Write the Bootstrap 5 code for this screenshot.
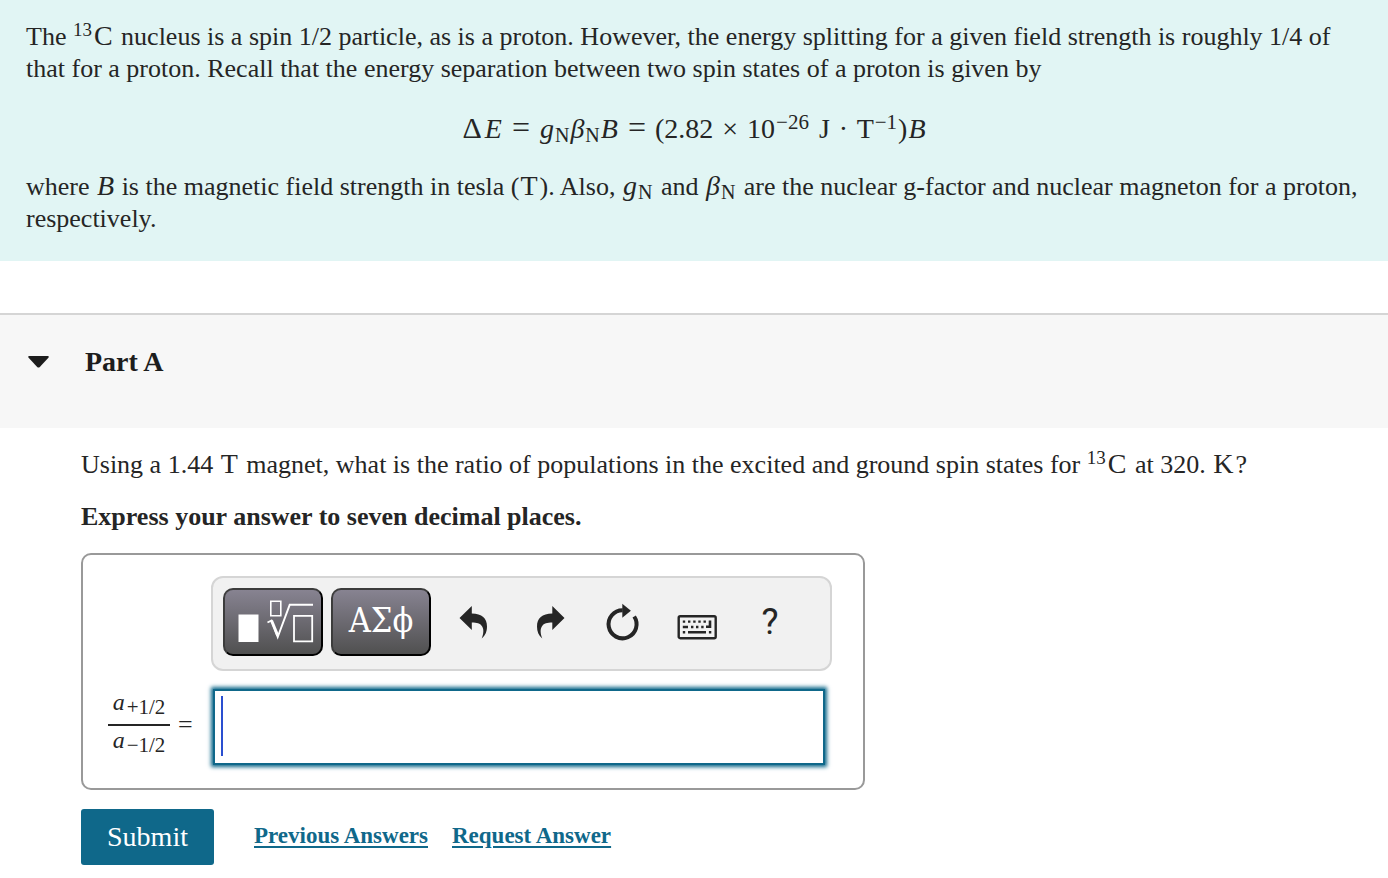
<!DOCTYPE html>
<html lang="en">
<head>
<meta charset="utf-8">
<meta name="viewport" content="width=device-width, initial-scale=1">
<title>Part A</title>
<link rel="stylesheet" href="https://cdn.jsdelivr.net/npm/bootstrap@5.3.0/dist/css/bootstrap.min.css">
<style>
  body { font-family: "Liberation Serif", serif; font-size: 26px; line-height: 32px; color: #252525; background: #fff; }
  .intro { background: #e1f5f4; padding: 21px 26px 26px; }
  .intro p, .question p { margin: 0; }
  sup, sub { line-height: 0; vertical-align: baseline; }
  sup { top: -9px; font-size: 19px; margin-right: 1px; }
  sub { bottom: -4px; font-size: 20px; margin-right: 2px; }
  i, .sym { font-size: 28px; line-height: 0; }
  i { margin: 0 1px; }
  .sym { margin: 0 2px 0 1px; }
  .equation { padding: 28px 0 26px; font-size: 28px; }
  .equation sup { font-size: 21px; margin: 0 1px; }
  .equation sub { margin-right: 0; }
  .equation .sym { font-size: 30px; }
  .rel { margin: 0 9px; font-size: 32px; line-height: 0; }
  .times { margin: 0 2px; }
  .unit { margin-left: 9px; }
  .part-head { margin-top: 52px; height: 115px; padding: 0 28px 20px; border-top: 2px solid #d5d5d5; background: #f7f7f7; }
  .part-head h2 { font-size: 28px; line-height: 32px; font-weight: 700; margin: 0 0 0 36px; color: #1d1d1d; }
  .question { padding: 21px 24px 12px 81px; }
  .answer-box { max-width: 784px; border: 2px solid #999; border-radius: 10px; padding: 21px 31px 22px 25px; margin: 20px 0 19px; }
  .label-col { width: 103px; }
  .toolbar { border: 2px solid #d5d5d5; border-radius: 12px; background: #f1f1f1; height: 95px; padding: 10px; margin-bottom: 17px; }
  .key { width: 100px; height: 68px; padding: 0; border: 2px solid; border-color: #3c3c3c #000 #000 #3c3c3c; border-radius: 10px; background: linear-gradient(#878391, #505050); color: #fff; font-family: "DejaVu Serif Condensed", "DejaVu Serif", serif; font-size: 34px; line-height: 60px; }
  .greek { padding-bottom: 4px; }
  .tools { margin-left: 6px; }
  .tool { width: 74px; height: 68px; padding: 0; border: 0; background: none; color: #252525; font-family: Roboto, sans-serif; font-size: 36px; line-height: 68px; }
  .tool svg { display: block; margin: 0 auto; overflow: visible; }
  .fraction { font-size: 24px; font-style: italic; line-height: 28px; width: 62px; }
  .fraction sub { font-size: 21px; font-style: normal; margin: 0 0 0 2px; bottom: -4px; }
  .fraction .numer { border-bottom: 2px solid #252525; padding-bottom: 8px; }
  .fraction .denom { padding-bottom: 12px; }
  .answer { height: 76px; border: 2px solid #0f688a; border-radius: 0; margin: 0 7px 0 2px; box-shadow: 0 0 4px 2px #0f688a; background: linear-gradient(#2a4fd0, #2a4fd0) 6px 5px / 2px 60px no-repeat #fff; padding: 0 12px; font-size: 26px; outline: 0; }
  .submit { width: 133px; height: 56px; padding: 0; border: 0; border-radius: 3px; background: #0f688a; color: #fff; font-size: 28px; }
  .action { color: #0f688a; font-size: 23px; font-weight: 700; padding-bottom: 2px; text-decoration-thickness: 2px; text-underline-offset: 3px; }
</style>
</head>
<body>
<section class="intro">
  <p>The <sup>13</sup><span class="sym">C</span> nucleus is a spin 1/2 particle, as is a proton. However, the energy splitting for a given field strength is roughly 1/4 of that for a proton. Recall that the energy separation between two spin states of a proton is given by</p>
  <p class="equation text-center"><span class="sym">Δ</span><i>E</i><span class="rel">=</span><i>g</i><sub>N</sub><i>β</i><sub>N</sub><i>B</i><span class="rel">=</span>(2.82 <span class="times">×</span> 10<sup>−26</sup><span class="unit">J <span class="times">·</span> T<sup>−1</sup></span>)<i>B</i></p>
  <p>where <i>B</i> is the magnetic field strength in tesla (<span class="sym">T</span>). Also, <i>g</i><sub>N</sub> and <i>β</i><sub>N</sub> are the nuclear g-factor and nuclear magneton for a proton, respectively.</p>
</section>

<header class="part-head d-flex align-items-center">
  <svg width="21" height="12" viewBox="0 0 21 12" aria-hidden="true"><path d="M1.2 0h18.6q1.6.3.6 1.7l-8.6 9.2q-1.3 1.2-2.6 0L.6 1.7Q-.4.3 1.2 0z" fill="#1d1d1d"/></svg>
  <h2>Part A</h2>
</header>

<main class="question">
  <p>Using a 1.44 <span class="sym">T</span> magnet, what is the ratio of populations in the excited and ground spin states for <sup>13</sup><span class="sym">C</span> at 320. <span class="sym">K</span>?</p>
  <p class="fw-bold pt-3 mt-1">Express your answer to seven decimal places.</p>

  <form>
    <div class="answer-box">
      <div class="d-flex">
        <div class="label-col flex-shrink-0"></div>
        <div class="toolbar d-flex flex-grow-1" role="toolbar" aria-label="Equation tools">
          <button type="button" class="key me-2" aria-label="Templates">
            <svg class="d-block" width="96" height="64" viewBox="225 590 96 64" fill="none" stroke="#fff" aria-hidden="true">
              <path d="M238.500 614.500h20v27.500h-20z" fill="#fff" stroke="none"/>
              <path d="M270.800 601.200h10v14.600h-10z" stroke-width="1.600"/>
              <path d="M294 615.800h18.200v25.500H294z" stroke-width="1.800"/>
              <path d="M267.500 622.500l4-2 6.200 16.500 12-32.200h23.300" stroke-width="1.900"/>
              <path d="M271.500 620.500l6.200 15" stroke-width="3"/>
            </svg>
          </button>
          <button type="button" class="key greek" aria-label="Greek letters">ΑΣϕ</button>
          <div class="tools d-flex">
            <button type="button" class="tool" aria-label="Undo"><svg width="40" height="40" viewBox="0 0 40 40" fill="currentColor"><path d="M5.500 16L17.800 4v7.600C28 11.600 33 16.500 33 24.500c0 5-1.500 8.700-5.300 12 2-5 2.300-9.500.3-12.300-2-3-5-3.700-10.200-3.700V28z"/></svg></button>
            <button type="button" class="tool" aria-label="Redo"><svg width="40" height="40" viewBox="0 0 40 40" fill="currentColor"><path d="M36.500 16L24.300 4v7.600C14 11.600 9 16.500 9 24.500c0 5 1.500 8.700 5.300 12-2-5-2.300-9.500-.3-12.300 2-3 5-3.700 10.300-3.700V28z"/></svg></button>
            <button type="button" class="tool" aria-label="Reset"><svg width="40" height="40" viewBox="0 0 40 40"><path d="M32.200 14.500A14 14 0 1 1 20.700 8.300" fill="none" stroke="currentColor" stroke-width="4"/><path d="M20.300 1.800v14l8.600-7z" fill="currentColor"/></svg></button>
            <button type="button" class="tool" aria-label="Keyboard shortcuts"><svg width="40" height="40" viewBox="0 0 40 40"><rect x="2.700" y="14.200" width="37" height="22" rx="1.500" fill="none" stroke="currentColor" stroke-width="2.400"/><path fill="currentColor" d="M6.800 18.400h2.400v2.400H6.800zM12 18.400h2.400v2.400H12zM17.200 18.400h2.400v2.400h-2.400zM22.300 18.400h2.400v2.400h-2.400zM27.500 18.400h2.400v2.400h-2.400zM32.700 18.400h2.600v7.600H30v-2.400h2.700zM6.800 23.800H12v2.400H6.800zM15 23.800h2.400v2.400H15zM20 23.800h2.400v2.400H20zM25.200 23.800h2.400v2.400h-2.400zM6.800 29.100h2.400v2.400H6.800zM12 29.100h18v2.400H12zM32.900 29.100h2.400v2.400h-2.400z"/></svg></button>
            <button type="button" class="tool" aria-label="Help">?</button>
          </div>
        </div>
      </div>
      <div class="d-flex align-items-center">
        <label for="ratio" class="label-col flex-shrink-0 d-flex align-items-center">
          <span class="fraction text-center"><span class="numer d-block">a<sub>+1/2</sub></span><span class="denom d-block">a<sub>−1/2</sub></span></span>
          <span class="ms-2 pb-1">=</span>
        </label>
        <input id="ratio" type="text" class="answer flex-grow-1" autocomplete="off">
      </div>
    </div>
    <div class="d-flex align-items-center">
      <button type="submit" class="submit">Submit</button>
      <a href="#" class="action ms-4 ps-3">Previous Answers</a>
      <a href="#" class="action ms-4">Request Answer</a>
    </div>
  </form>
</main>
<script src="https://cdn.jsdelivr.net/npm/bootstrap@5.3.0/dist/js/bootstrap.bundle.min.js"></script>
</body>
</html>
